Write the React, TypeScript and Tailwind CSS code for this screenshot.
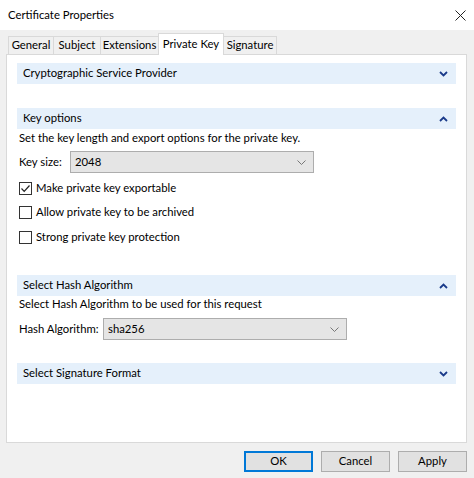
import React from "react";

const font = { fontFamily: 'Lato, "Noto Sans", sans-serif' };
const T = "text-[11.3px]";

function ChevronDown() {
  return (
    <svg width="9" height="6" viewBox="0 0 9 6" className="block">
      <path d="M1 1 L4.5 4.5 L8 1" fill="none" stroke="#1a3a8a" strokeWidth="1.8" />
    </svg>
  );
}
function ChevronUp() {
  return (
    <svg width="9" height="6" viewBox="0 0 9 6" className="block">
      <path d="M1 5 L4.5 1.5 L8 5" fill="none" stroke="#1a3a8a" strokeWidth="1.8" />
    </svg>
  );
}

function SectionHeader({ title, open }: { title: string; open?: boolean }) {
  return (
    <div className="flex h-[21px] items-center justify-between bg-[#e5f0fb] pl-[6px] pr-[8px]">
      <span className="text-[11.3px] text-black">{title}</span>
      {open ? <ChevronUp /> : <ChevronDown />}
    </div>
  );
}

function Combo({ value, width }: { value: string; width: number }) {
  return (
    <div
      className="flex h-[22px] items-center justify-between border border-[#adadad] bg-[#e5e5e5] pl-[4px] pr-[7px]"
      style={{ width }}
    >
      <span className="text-[11.3px] text-black">{value}</span>
      <svg width="9" height="5" viewBox="0 0 9 5" className="block">
        <path d="M0.5 0.5 L4.5 4.5 L8.5 0.5" fill="none" stroke="#777" strokeWidth="1" />
      </svg>
    </div>
  );
}

function Check({ label, checked }: { label: string; checked?: boolean }) {
  return (
    <div className="flex h-[24px] items-center">
      <div className="flex h-[13px] w-[13px] items-center justify-center border border-[#333] bg-white">
        {checked && (
          <svg width="11" height="11" viewBox="0 0 11 11" className="block">
            <path d="M1.5 5.5 L4.2 8.3 L9.5 2.5" fill="none" stroke="#222" strokeWidth="1.2" />
          </svg>
        )}
      </div>
      <span className="ml-[4px] text-[11.3px] text-black">{label}</span>
    </div>
  );
}

function Button({ label, primary }: { label: string; primary?: boolean }) {
  return (
    <div
      className={
        "flex h-[21px] w-[69px] items-center justify-center border bg-[#e1e1e1] text-[11.3px] text-black " +
        (primary ? "border-[#0078d7] shadow-[inset_0_0_0_1px_#0078d7]" : "border-[#adadad]")
      }
    >
      {label}
    </div>
  );
}

export default function App() {
  return (
    <div className={"flex h-[478px] w-[474px] flex-col overflow-hidden bg-[#f0f0f0] " + T} style={font}>
      <div className="flex h-[30px] items-center justify-between bg-white pl-[8px] pr-[8px]">
        <span className="text-[11.3px] text-black">Certificate Properties</span>
        <svg width="11" height="11" viewBox="0 0 11 11" className="block">
          <path d="M0.5 0.5 L10.5 10.5 M10.5 0.5 L0.5 10.5" stroke="#222" strokeWidth="1" />
        </svg>
      </div>
      <div className="flex flex-1 flex-col pl-[6px] pr-[7px] pt-[3px]">
        <div className="flex items-end pl-[2px]">
          <div className="flex h-[18px] w-[45px] items-center justify-center border border-b-0 border-r-0 border-[#d9d9d9] text-[11.3px] text-black">
            General
          </div>
          <div className="flex h-[18px] w-[47px] items-center justify-center border border-b-0 border-r-0 border-[#d9d9d9] text-[11.3px] text-black">
            Subject
          </div>
          <div className="flex h-[18px] w-[58px] items-center justify-center border border-b-0 border-r-0 border-[#d9d9d9] text-[11.3px] text-black">
            Extensions
          </div>
          <div className="relative z-10 -mb-px flex h-[22px] w-[66px] items-center justify-center border border-b-0 border-[#d9d9d9] bg-white text-[11.3px] text-black">
            Private Key
          </div>
          <div className="flex h-[18px] w-[53px] items-center justify-center border border-b-0 border-l-0 border-[#d9d9d9] text-[11.3px] text-black">
            Signature
          </div>
        </div>
        <div className="flex h-[389px] flex-col border border-[#d9d9d9] bg-white px-[10px] pt-[8px]">
          <SectionHeader title="Cryptographic Service Provider" />
          <div className="mt-[24px]">
            <SectionHeader title="Key options" open />
          </div>
          <div className="pl-[2px]">
            <div className="mt-[1px] h-[16px] text-[11.3px] leading-[16px] text-black">
              Set the key length and export options for the private key.
            </div>
            <div className="mt-[5px] flex items-center">
              <span className="w-[51px] whitespace-nowrap text-[11.3px] text-black">Key size:</span>
              <Combo value="2048" width={244} />
            </div>
            <div className="mt-[3px]">
              <Check label="Make private key exportable" checked />
              <Check label="Allow private key to be archived" />
              <div className="mt-[1px]">
                <Check label="Strong private key protection" />
              </div>
            </div>
          </div>
          <div className="mt-[26px]">
            <SectionHeader title="Select Hash Algorithm" open />
          </div>
          <div className="pl-[2px]">
            <div className="h-[16px] text-[11.3px] leading-[16px] text-black">
              Select Hash Algorithm to be used for this request
            </div>
            <div className="mt-[6px] flex items-center">
              <span className="w-[84px] whitespace-nowrap text-[11.3px] text-black">Hash Algorithm:</span>
              <Combo value="sha256" width={244} />
            </div>
          </div>
          <div className="mt-[23px]">
            <SectionHeader title="Select Signature Format" />
          </div>
        </div>
        <div className="mt-[8px] flex justify-end gap-[8px] pr-0">
          <Button label="OK" primary />
          <Button label="Cancel" />
          <Button label="Apply" />
        </div>
      </div>
    </div>
  );
}
